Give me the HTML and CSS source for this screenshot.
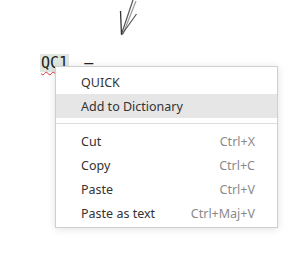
FILE: index.html
```html
<!DOCTYPE html>
<html>
<head>
<meta charset="utf-8">
<link rel="stylesheet" href="styles.css">
</head>
<body>
<div class="canvas">
  <svg class="arrow" width="26" height="40" viewBox="0 0 26 40">
    <path d="M21 0 L9.5 34" stroke="#555" stroke-width="1.2" fill="none"/>
    <path d="M24 1 L11 34" stroke="#999" stroke-width="1.2" fill="none"/>
    <path d="M8.5 11 L9.5 35" stroke="#333" stroke-width="1.3" fill="none"/>
    <path d="M24.5 14 L9.5 35" stroke="#555" stroke-width="1.2" fill="none"/>
  </svg>
  <div class="line"><span class="word">QC1</span> <span class="dash">–</span></div>
  <div class="menu">
    <div class="item">QUICK</div>
    <div class="item active">Add to Dictionary</div>
    <div class="sep"></div>
    <div class="item"><span>Cut</span><span class="key">Ctrl+X</span></div>
    <div class="item"><span>Copy</span><span class="key">Ctrl+C</span></div>
    <div class="item"><span>Paste</span><span class="key">Ctrl+V</span></div>
    <div class="item"><span>Paste as text</span><span class="key">Ctrl+Maj+V</span></div>
  </div>
</div>
</body>
</html>
```
FILE: styles.css
```css
html, body { margin: 0; padding: 0; background: #fff; }
.canvas { position: relative; width: 304px; height: 254px; overflow: hidden; font-family: "Noto Sans", sans-serif; }
.arrow { position: absolute; left: 112px; top: 0; }
.line { position: absolute; left: 40px; top: 54px; font-family: "DejaVu Sans Mono", monospace; font-size: 15px; color: #222; line-height: 18px; }
.word { background: #e0e7e1; text-decoration: underline wavy #d33; text-decoration-thickness: 1px; text-underline-offset: 3px; padding: 0 1px; }
.dash { margin-left: 6px; }
.menu { position: absolute; left: 55px; top: 66px; width: 221px; padding: 3px 0 2px; background: #fff; border: 1px solid #cfcfcf; box-shadow: 0 1px 8px rgba(0,0,0,0.12); }
.item { height: 24px; display: flex; align-items: center; justify-content: space-between; padding: 0 22px 0 25px; font-size: 12.5px; color: #333; }
.item.active { background: #e6e6e6; }
.key { color: #8a8a8a; }
.sep { height: 1px; background: #dedede; margin: 5px 0 5px; }
```
